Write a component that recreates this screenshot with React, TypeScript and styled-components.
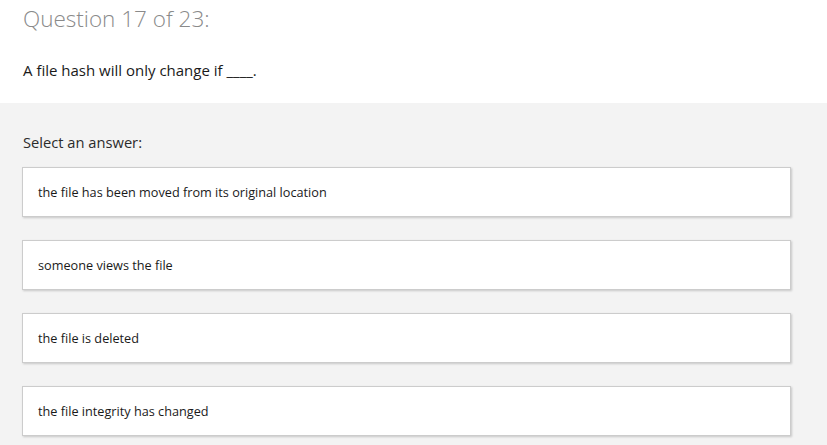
import React from 'react';
import styled, { createGlobalStyle } from 'styled-components';

const GlobalStyle = createGlobalStyle`
  html, body {
    margin: 0;
    padding: 0;
    background: #f3f3f3;
    font-family: "Open Sans", "Noto Sans", sans-serif;
  }
`;

const Page = styled.div`
  width: 827px;
  min-height: 445px;
  background: #f3f3f3;
`;

const Header = styled.header`
  background: #ffffff;
  height: 103px;
  box-sizing: border-box;
  padding: 3px 23px 0;
`;

const Title = styled.h1`
  margin: 0;
  font-size: 22.5px;
  font-weight: 300;
  color: #8a8a8a;
  line-height: 32px;
`;

const Prompt = styled.p`
  margin: 25px 0 0;
  font-size: 15px;
  color: #1a1a1a;
  line-height: 20px;
`;

const Body = styled.section`
  padding: 29px 36px 0 22px;
`;

const Label = styled.div`
  font-size: 14.7px;
  color: #2b2b2b;
  line-height: 20px;
  padding-left: 1px;
`;

const AnswerList = styled.div`
  margin-top: 15px;
  display: flex;
  flex-direction: column;
  gap: 23px;
`;

const Answer = styled.button`
  display: flex;
  align-items: center;
  height: 50px;
  box-sizing: border-box;
  padding: 0 15px;
  background: #ffffff;
  border: 1px solid #cccccc;
  box-shadow: 1px 1px 2px rgba(0, 0, 0, 0.18);
  font-family: inherit;
  font-size: 12.7px;
  color: #1a1a1a;
  text-align: left;
  cursor: pointer;
`;

const answers = [
  'the file has been moved from its original location',
  'someone views the file',
  'the file is deleted',
  'the file integrity has changed',
];

export default function App() {
  return (
    <Page>
      <GlobalStyle />
      <Header>
        <Title>Question 17 of 23:</Title>
        <Prompt>A file hash will only change if ____.</Prompt>
      </Header>
      <Body>
        <Label>Select an answer:</Label>
        <AnswerList>
          {answers.map((a) => (
            <Answer key={a}>{a}</Answer>
          ))}
        </AnswerList>
      </Body>
    </Page>
  );
}
